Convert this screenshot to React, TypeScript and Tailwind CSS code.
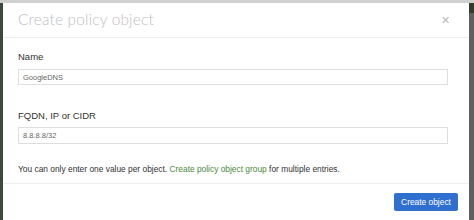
import React from 'react';

const App: React.FC = () => {
    return (
        <div className="w-[474px] h-[220px] bg-[#5f5f5f] flex flex-col overflow-hidden">
            <div className="h-[3px] bg-[#cfcfcf] shrink-0" />
            <div className="flex flex-1">
                <div className="w-[3px] bg-[#3c4a3c]" />
                <div className="w-[466px] bg-white flex flex-col">
                    <div className="h-[35px] flex items-center justify-between pl-[15px] pr-[19px] border-b border-[#ececec]">
                        <h2 className="text-[15.4px] font-light text-[#c0c0c0] tracking-[0.2px]" style={{ fontFamily: 'Lato, sans-serif' }}>Create policy object</h2>
                        <span className="text-[11px] text-[#b8b8b8] leading-none" style={{ fontFamily: '"Liberation Sans", sans-serif' }}>✕</span>
                    </div>
                    <div className="pl-[15px] pr-[21px] pt-[13px]" style={{ fontFamily: '"Liberation Sans", sans-serif' }}>
                        <label className="block text-[9.5px] leading-[12px] text-[#333] mb-[6px]">Name</label>
                        <input readOnly value="GoogleDNS" className="block w-full h-[16px] border border-[#dedede] px-[4px] text-[7.5px] text-[#666] outline-none" />
                        <label className="block text-[9.5px] leading-[12px] text-[#333] mt-[25px] mb-[5px]">FQDN, IP or CIDR</label>
                        <input readOnly value="8.8.8.8/32" className="block w-full h-[17px] border border-[#dedede] px-[4px] text-[7.5px] text-[#666] outline-none" />
                        <p className="text-[8.4px] leading-[12px] text-[#333] mt-[19px]">
                            You can only enter one value per object. <span className="text-[#4b8a3c]">Create policy object group</span> for multiple entries.
                        </p>
                    </div>
                    <div className="mt-[8px] border-t border-[#eeeeee] flex justify-end pr-[11px] pt-[9px]">
                        <button className="h-[18px] w-[64px] bg-[#2f6fd0] text-white text-[8.4px] rounded-[2px]" style={{ fontFamily: '"Liberation Sans", sans-serif' }}>Create object</button>
                    </div>
                </div>
                <div className="flex-1 flex flex-col">
                    <div className="h-[10px] bg-[#2f3d2a]" />
                    <div className="flex-1 bg-[#5f5f5f]" />
                </div>
            </div>
        </div>
    );
};

export default App;
